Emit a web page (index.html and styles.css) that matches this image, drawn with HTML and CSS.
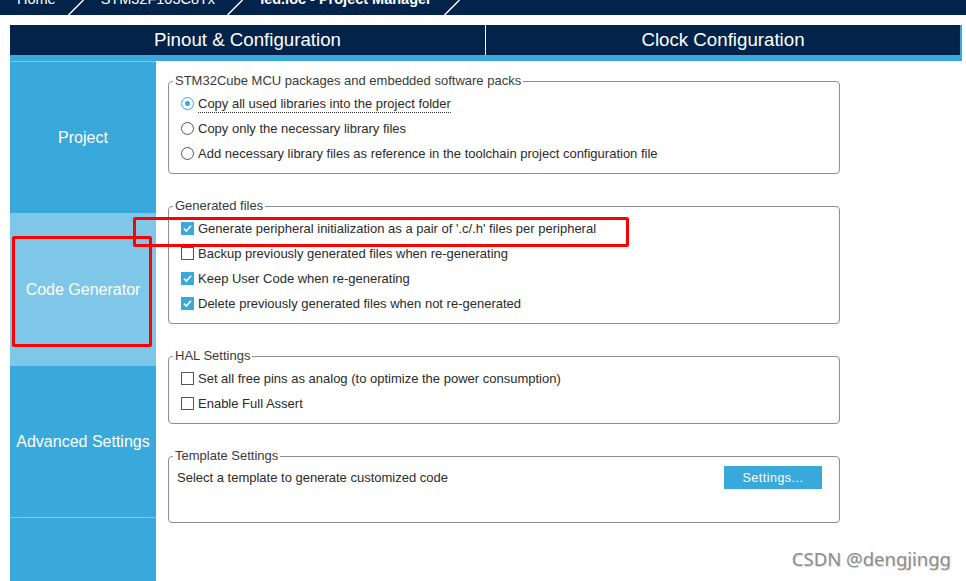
FILE: index.html
```html
<!DOCTYPE html>
<html>
<head>
  <title>led.ioc - Project Manager</title>
  <link rel="stylesheet" href="styles.css">
</head>
<body>
  <div class="topbar">
    <span class="crumb">Home</span>
    <svg class="slash" width="16" height="15" viewBox="0 0 16 15"><line x1="0.5" y1="15" x2="15.5" y2="0" stroke="#fff" stroke-width="1.4"/></svg>
    <span class="crumb">STM32F103C8Tx</span>
    <svg class="slash" width="16" height="15" viewBox="0 0 16 15"><line x1="0.5" y1="15" x2="15.5" y2="0" stroke="#fff" stroke-width="1.4"/></svg>
    <span class="crumb current">led.ioc - Project Manager</span>
    <svg class="slash" width="16" height="15" viewBox="0 0 16 15"><line x1="0.5" y1="15" x2="15.5" y2="0" stroke="#fff" stroke-width="1.4"/></svg>
  </div>

  <div class="tabs">
    <div class="tab">Pinout &amp; Configuration</div>
    <div class="tab">Clock Configuration</div>
  </div>

  <div class="workspace">
    <nav class="sidebar">
      <div class="side-item">Project</div>
      <div class="side-item active">Code Generator</div>
      <div class="side-item">Advanced Settings</div>
      <div class="side-item rest"></div>
    </nav>

    <main class="content">
      <fieldset class="group">
        <legend>STM32Cube MCU packages and embedded software packs</legend>
        <div class="option"><span class="radio on"></span><span class="label focused">Copy all used libraries into the project folder</span></div>
        <div class="option"><span class="radio"></span><span class="label">Copy only the necessary library files</span></div>
        <div class="option"><span class="radio"></span><span class="label">Add necessary library files as reference in the toolchain project configuration file</span></div>
      </fieldset>

      <fieldset class="group">
        <legend>Generated files</legend>
        <div class="option"><span class="check on"><svg width="11" height="11" viewBox="0 0 11 11"><path d="M2 5.6 L4.4 8 L9 2.8" fill="none" stroke="#fff" stroke-width="1.6"/></svg></span><span class="label">Generate peripheral initialization as a pair of '.c/.h' files per peripheral</span></div>
        <div class="option"><span class="check"></span><span class="label">Backup previously generated files when re-generating</span></div>
        <div class="option"><span class="check on"><svg width="11" height="11" viewBox="0 0 11 11"><path d="M2 5.6 L4.4 8 L9 2.8" fill="none" stroke="#fff" stroke-width="1.6"/></svg></span><span class="label">Keep User Code when re-generating</span></div>
        <div class="option"><span class="check on"><svg width="11" height="11" viewBox="0 0 11 11"><path d="M2 5.6 L4.4 8 L9 2.8" fill="none" stroke="#fff" stroke-width="1.6"/></svg></span><span class="label">Delete previously generated files when not re-generated</span></div>
      </fieldset>

      <fieldset class="group">
        <legend>HAL Settings</legend>
        <div class="option"><span class="check"></span><span class="label">Set all free pins as analog (to optimize the power consumption)</span></div>
        <div class="option"><span class="check"></span><span class="label">Enable Full Assert</span></div>
      </fieldset>

      <fieldset class="group template">
        <legend>Template Settings</legend>
        <div class="template-row">
          <span class="label">Select a template to generate customized code</span>
          <button class="btn">Settings...</button>
        </div>
      </fieldset>
    </main>
  </div>

  <div class="mark mark-nav"></div>
  <div class="mark mark-option"></div>
  <div class="watermark">CSDN @dengjingg</div>
</body>
</html>
```

FILE: styles.css
```css
body {
  margin: 0;
  height: 100vh;
  display: flex;
  flex-direction: column;
  overflow: hidden;
  background: #fff;
  font-family: "Liberation Sans", Arial, sans-serif;
}
.topbar {
  height: 15px;
  flex: none;
  display: flex;
  align-items: flex-start;
  background: #03234b;
  overflow: hidden;
}
.crumb {
  margin-top: -9px;
  padding: 0 12px 0 17px;
  font-size: 14.5px;
  line-height: 16px;
  color: #fff;
  white-space: nowrap;
}
.crumb.current {
  font-weight: bold;
}
.slash {
  flex: none;
  display: block;
}
.tabs {
  flex: none;
  display: grid;
  grid-template-columns: 475px 1fr;
  margin: 10px 4px 0 10px;
  padding: 0 2px 6px 0;
  background: #39a8db;
}
.tab {
  height: 30px;
  line-height: 30px;
  text-align: center;
  font-size: 18.7px;
  color: #fff;
  background: #03234b;
}
.tab + .tab {
  border-left: 1px solid #fff;
}
.workspace {
  flex: 1;
  display: flex;
  margin-left: 10px;
  min-height: 0;
}
.sidebar {
  width: 146px;
  flex: none;
  display: flex;
  flex-direction: column;
  background: #39a8db;
}
.side-item {
  height: 152px;
  flex: none;
  box-sizing: border-box;
  display: flex;
  align-items: center;
  justify-content: center;
  border-top: 1px solid #7ec7e9;
  font-size: 16px;
  color: #fff;
}
.side-item.active {
  background: #7ec7e9;
}
.side-item.rest {
  flex: 1;
}
.content {
  flex: 1;
  padding: 13px 0 0 12px;
}
.group {
  width: 672px;
  box-sizing: border-box;
  margin: 0 0 25px;
  padding: 3px 0 7px 4px;
  min-width: 0;
  border: 1px solid #8e8e8e;
  border-radius: 4px;
}
.group legend {
  padding: 0 2px;
  font-size: 13px;
  line-height: 14px;
  color: #3a3a3a;
}
.option {
  height: 25px;
  display: flex;
  align-items: center;
  padding-left: 8px;
}
.label {
  font-size: 13px;
  line-height: 15px;
  color: #2b2b2b;
  white-space: nowrap;
}
.label.focused {
  margin-top: 2px;
  padding-bottom: 1px;
  border-bottom: 1px dotted #333;
}
.radio,
.check {
  width: 13px;
  height: 13px;
  flex: none;
  box-sizing: border-box;
  margin-right: 4px;
  border: 1px solid #555;
  background: #fff;
  display: flex;
  align-items: center;
  justify-content: center;
}
.radio {
  border-radius: 50%;
}
.radio.on {
  border-color: #39a8db;
}
.radio.on::after {
  content: "";
  width: 5px;
  height: 5px;
  border-radius: 50%;
  background: #39a8db;
}
.check.on {
  border-color: #39a8db;
  background: #39a8db;
}
.check svg {
  display: block;
}
.template {
  padding-bottom: 33px;
}
.template-row {
  height: 23px;
  display: flex;
  align-items: center;
  justify-content: space-between;
  padding: 0 17px 0 4px;
}
.btn {
  width: 98px;
  height: 23px;
  padding: 0;
  border: none;
  background: #39a8db;
  color: #fff;
  font-family: "Liberation Sans", Arial, sans-serif;
  font-size: 12.5px;
  letter-spacing: 0.5px;
}
.mark {
  position: absolute;
  box-sizing: border-box;
  border: 3px solid #ff0000;
  border-radius: 2px;
}
.mark-nav {
  left: 12px;
  top: 236px;
  width: 140px;
  height: 111px;
}
.mark-option {
  left: 133px;
  top: 217px;
  width: 496px;
  height: 30px;
}
.watermark {
  position: absolute;
  right: 15px;
  top: 546px;
  font-family: "Noto Sans", sans-serif;
  font-size: 18.5px;
  color: #8c8c8c;
  text-shadow: 1px 1px 1px rgba(0, 0, 0, 0.15);
}
```
